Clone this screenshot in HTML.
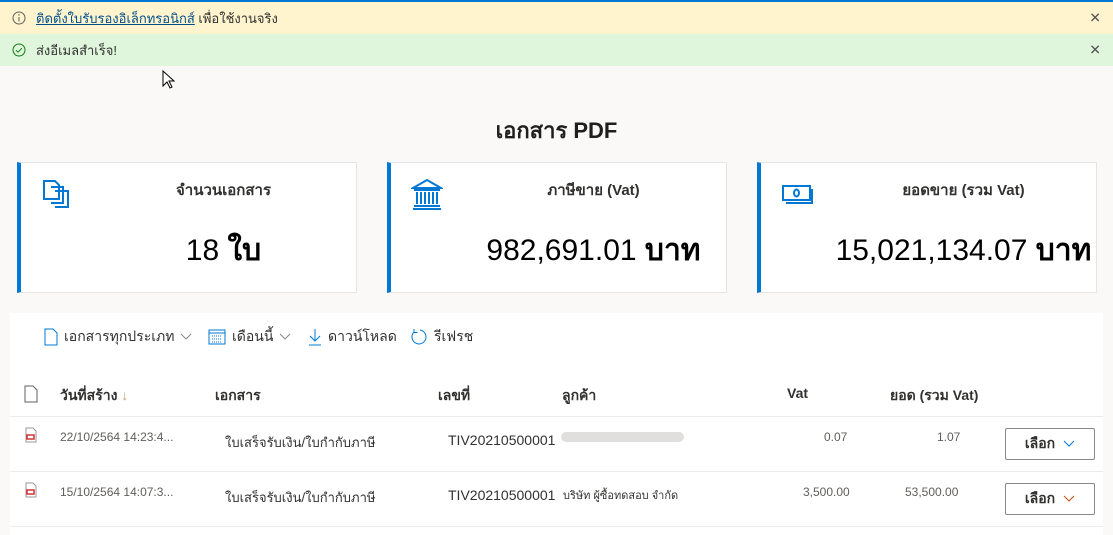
<!DOCTYPE html>
<html><head><meta charset="utf-8">
<style>
*{box-sizing:border-box;margin:0;padding:0}
body{width:1113px;height:535px;overflow:hidden;background:#faf9f8;font-family:"Liberation Sans","Noto Sans CJK SC",sans-serif;color:#323130;position:relative}
.bar{position:absolute;left:0;width:1113px;font-size:13px;display:flex;align-items:center}
.x{position:absolute;right:12px;top:50%;transform:translateY(-50%);font-size:14px;color:#555}
.card{position:absolute;top:162px;width:340px;height:131px;background:#fff;border:1px solid #e5e5e5;border-left:4px solid #0078d4}
.card .t{position:absolute;left:70px;right:0;top:15px;text-align:center;font-size:15px;font-weight:bold;color:#323130}
.card .v{position:absolute;left:70px;right:0;top:64px;text-align:center;font-size:30px;color:#000;white-space:nowrap}
.card .v b{font-weight:bold}
.card svg{position:absolute;left:20px;top:14px}
.panel{position:absolute;left:10px;top:313px;width:1093px;height:222px;background:#fff}
.tb{position:absolute;top:326px;font-size:14px;color:#323130;display:flex;align-items:center;gap:6px}
.h{position:absolute;top:385px;font-size:14px;font-weight:bold;color:#323130}
.line{position:absolute;left:10px;width:1093px;height:1px;background:#edebe9}
.c{position:absolute;font-size:13px;color:#323130;white-space:nowrap}
.g{color:#605e5c;font-size:12px}
.btn{position:absolute;left:1005px;width:90px;height:32px;border:1px solid #8a8886;border-radius:2px;font-size:14px;font-weight:bold;display:flex;align-items:center;justify-content:center;gap:8px;background:#fff}
</style></head><body>
<div style="position:absolute;top:0;left:0;width:1113px;height:2px;background:#0078d4"></div>
<div class="bar" style="top:2px;height:32px;background:#fff4ce">
<svg style="margin-left:12px" width="14" height="14" viewBox="0 0 14 14"><circle cx="7" cy="7" r="6" fill="none" stroke="#605e5c"/><line x1="7" y1="6" x2="7" y2="10.5" stroke="#605e5c"/><circle cx="7" cy="4" r=".7" fill="#605e5c"/></svg>
<span style="margin-left:10px"><u style="color:#004e8c">ติดตั้งใบรับรองอิเล็กทรอนิกส์</u> เพื่อใช้งานจริง</span><span class="x">✕</span></div>
<div class="bar" style="top:34px;height:32px;background:#dff6dd">
<svg style="margin-left:12px" width="14" height="14" viewBox="0 0 14 14"><circle cx="7" cy="7" r="6" fill="none" stroke="#107c10"/><path d="M4 7.2l2 2 4-4" fill="none" stroke="#107c10"/></svg>
<span style="margin-left:10px">ส่งอีเมลสำเร็จ!</span><span class="x">✕</span></div>
<svg style="position:absolute;left:162px;top:70px" width="14" height="20" viewBox="0 0 14 20"><path d="M1 1v15l4-4 3 6 2-1-3-6h5z" fill="#fff" stroke="#000"/></svg>
<div style="position:absolute;top:113px;left:0;width:1113px;text-align:center;font-size:22px;font-weight:bold;color:#201f1e">เอกสาร PDF</div>

<div class="card" style="left:17px"><svg width="30" height="34" viewBox="0 0 30 34"><path d="M3 4h11l4 4v14H3z M10 10h12v16H10 M14 14h13v16H14" fill="none" stroke="#0078d4" stroke-width="2"/></svg><div class="t">จำนวนเอกสาร</div><div class="v">18 <b>ใบ</b></div></div>
<div class="card" style="left:387px"><svg width="32" height="34" viewBox="0 0 32 34"><path d="M2 11L16 3l14 8z M3 13h26 M6 15v12 M10 15v12 M14 15v12 M18 15v12 M22 15v12 M26 15v12 M3 29h26 M2 32h28" fill="none" stroke="#0078d4" stroke-width="2"/></svg><div class="t">ภาษีขาย (Vat)</div><div class="v">982,691.01 <b>บาท</b></div></div>
<div class="card" style="left:757px"><svg width="34" height="34" viewBox="0 0 34 34"><rect x="2" y="9" width="27" height="14" fill="none" stroke="#0078d4" stroke-width="2"/><path d="M31 12v14H5" fill="none" stroke="#0078d4" stroke-width="2"/><ellipse cx="15.5" cy="16" rx="2.5" ry="3.5" fill="none" stroke="#0078d4" stroke-width="2"/></svg><div class="t">ยอดขาย (รวม Vat)</div><div class="v">15,021,134.07 <b>บาท</b></div></div>

<div class="panel"></div>
<div class="tb" style="left:44px"><svg width="14" height="18" viewBox="0 0 14 18"><path d="M1 1h8l4 4v12H1z" fill="none" stroke="#0078d4"/></svg> เอกสารทุกประเภท <svg width="12" height="8" viewBox="0 0 12 8"><path d="M1 1l5 5 5-5" fill="none" stroke="#888"/></svg></div>
<div class="tb" style="left:208px"><svg width="18" height="16" viewBox="0 0 18 16"><rect x="1" y="1" width="16" height="14" fill="none" stroke="#0078d4"/><line x1="1" y1="4" x2="17" y2="4" stroke="#0078d4"/><path d="M4 7h10M4 10h10M4 13h10" stroke="#0078d4" stroke-dasharray="1 1"/></svg> เดือนนี้ <svg width="12" height="8" viewBox="0 0 12 8"><path d="M1 1l5 5 5-5" fill="none" stroke="#888"/></svg></div>
<div class="tb" style="left:308px"><svg width="14" height="18" viewBox="0 0 14 18"><path d="M7 1v12M2 8l5 5 5-5M1 17h12" fill="none" stroke="#0078d4"/></svg> ดาวน์โหลด</div>
<div class="tb" style="left:410px"><svg width="18" height="18" viewBox="0 0 18 18"><path d="M10 2A7 7 0 1 1 4 4" fill="none" stroke="#0078d4"/><path d="M4 1v3.5h3.5" fill="none" stroke="#0078d4"/></svg> รีเฟรช</div>

<svg style="position:absolute;left:24px;top:385px" width="14" height="18" viewBox="0 0 14 18"><path d="M1 1h8l4 4v12H1z" fill="none" stroke="#605e5c"/></svg>
<div class="h" style="left:60px">วันที่สร้าง <span style="color:#c8a070;font-weight:normal">↓</span></div>
<div class="h" style="left:215px">เอกสาร</div>
<div class="h" style="left:438px">เลขที่</div>
<div class="h" style="left:562px">ลูกค้า</div>
<div class="h" style="left:787px">Vat</div>
<div class="h" style="left:890px">ยอด (รวม Vat)</div>
<div class="line" style="top:416px"></div>
<div class="line" style="top:471px"></div>
<div class="line" style="top:526px"></div>

<svg style="position:absolute;left:24px;top:427px" width="14" height="16" viewBox="0 0 14 16"><path d="M2 1h7l3 3v11H2z" fill="none" stroke="#999"/><rect x="3" y="8" width="7" height="4" fill="none" stroke="#d13438" stroke-width="1.5"/></svg>
<div class="c g" style="left:60px;top:430px">22/10/2564 14:23:4...</div>
<div class="c" style="left:225px;top:432px">ใบเสร็จรับเงิน/ใบกำกับภาษี</div>
<div class="c" style="left:448px;top:432px;font-size:14px">TIV20210500001</div>
<div style="position:absolute;left:561px;top:432px;width:123px;height:10px;border-radius:5px;background:#e1dfdd"></div>
<div class="c g" style="left:824px;top:430px">0.07</div>
<div class="c g" style="left:937px;top:430px">1.07</div>
<div class="btn" style="top:428px">เลือก <svg width="12" height="8" viewBox="0 0 12 8"><path d="M1 1l5 5 5-5" fill="none" stroke="#0078d4"/></svg></div>

<svg style="position:absolute;left:24px;top:482px" width="14" height="16" viewBox="0 0 14 16"><path d="M2 1h7l3 3v11H2z" fill="none" stroke="#999"/><rect x="3" y="8" width="7" height="4" fill="none" stroke="#d13438" stroke-width="1.5"/></svg>
<div class="c g" style="left:60px;top:485px">15/10/2564 14:07:3...</div>
<div class="c" style="left:225px;top:487px">ใบเสร็จรับเงิน/ใบกำกับภาษี</div>
<div class="c" style="left:448px;top:487px;font-size:14px">TIV20210500001</div>
<div class="c" style="left:563px;top:486px;font-size:11px">บริษัท ผู้ซื้อทดสอบ จำกัด</div>
<div class="c g" style="left:803px;top:485px">3,500.00</div>
<div class="c g" style="left:905px;top:485px">53,500.00</div>
<div class="btn" style="top:483px">เลือก <svg width="12" height="8" viewBox="0 0 12 8"><path d="M1 1l5 5 5-5" fill="none" stroke="#c05010"/></svg></div>
</body></html>
